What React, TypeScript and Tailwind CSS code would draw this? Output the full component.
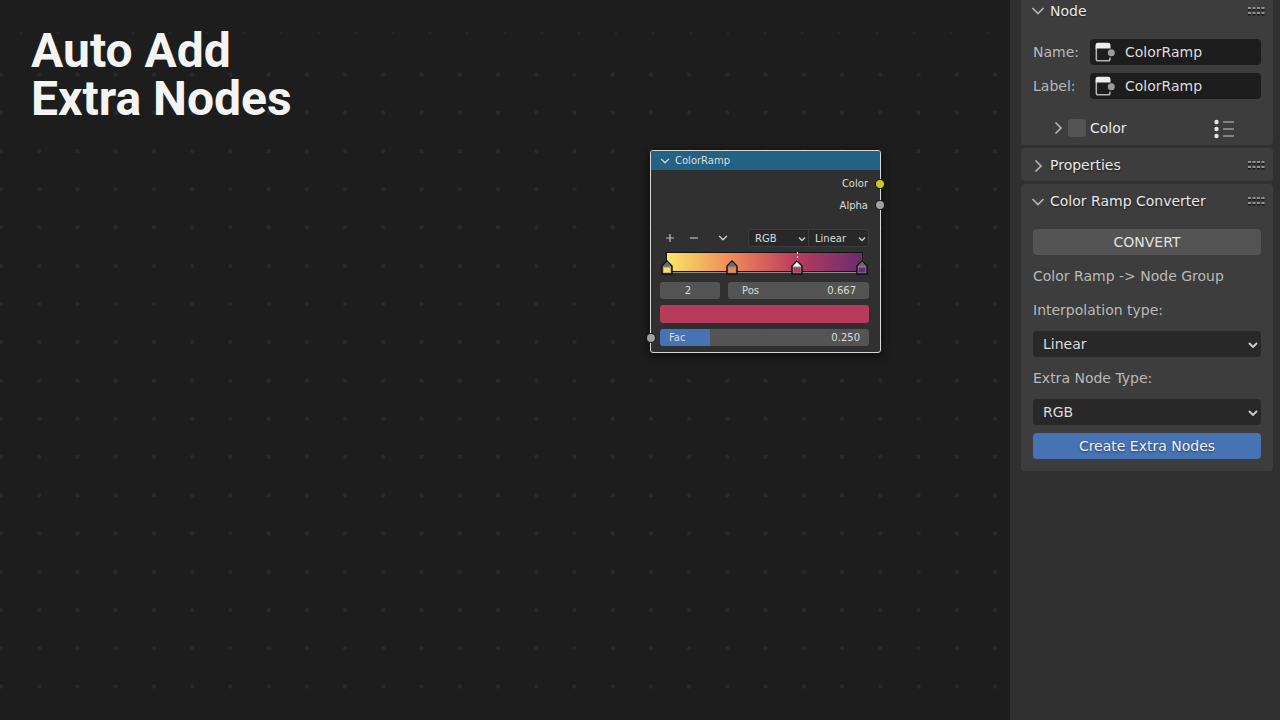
import React from 'react';

const COLS = 60;
const ROWS = 40;

const STOPS = [
  { pos: 0, color: '#f7e45c', active: false },
  { pos: 65, color: '#f0824f', active: false },
  { pos: 130, color: '#b73a5d', active: true },
  { pos: 195, color: '#6b2a7c', active: false },
];

function CanvasGrid() {
  const dots: React.ReactNode[] = [];
  for (let col = 0; col < COLS; col++) {
    dots.push(<rect key={`top-${col}`} x={Math.round(20 + col * 37.2)} y={32} width={2} height={2} fill="#262626" />);
    for (let row = 0; row < ROWS; row++) {
      dots.push(
        <circle
          key={`${col}-${row}`}
          cx={1 + col * 38.23}
          cy={74.5 + row * 38.25}
          r={2.2}
          fill="#292929"
        />
      );
    }
  }
  return (
    <svg className="absolute inset-0 h-full w-full" aria-hidden="true">
      {dots}
    </svg>
  );
}

function Chevron({ open = true, className = '' }: { open?: boolean; className?: string }) {
  return (
    <svg viewBox="0 0 14 14" className={className} fill="none" stroke="currentColor" strokeWidth="1.7" aria-hidden="true">
      <path d={open ? 'M1.5 4 L7 9.5 L12.5 4' : 'M4.5 1.5 L10 7 L4.5 12.5'} />
    </svg>
  );
}

function SelectArrow({ className = '' }: { className?: string }) {
  return (
    <svg viewBox="0 0 10 8" className={className} fill="none" stroke="#d0d0d0" strokeWidth="1.8" aria-hidden="true">
      <path d="M1 2 L5 6 L9 2" />
    </svg>
  );
}

function Grip() {
  return (
    <svg viewBox="0 0 17 9" className="h-[9px] w-[17px]" aria-hidden="true">
      {[0, 4.5, 9, 13.5].map((x) =>
        [0, 5].map((y) => (
          <g key={`${x}-${y}`}>
            <rect x={x} y={y + 2} width="3" height="1.6" fill="#1b1b1b" />
            <rect x={x} y={y} width="3" height="2" fill="#8f8f8f" />
          </g>
        ))
      )}
    </svg>
  );
}

function NodeIcon() {
  return (
    <svg viewBox="0 0 20 20" className="h-5 w-5 shrink-0" fill="none" aria-hidden="true">
      <path d="M1.3 6 V17 Q1.3 18.8 3 18.8 H13 Q15 18.8 15 17 V15.5" stroke="#b4b4b4" strokeWidth="1.5" />
      <path d="M0.5 6.5 V3 Q0.5 0.8 3 0.8 H13 Q15.5 0.8 15.5 3 V6.5 Z" fill="#ededed" />
      <circle cx="16.3" cy="10.8" r="3.5" fill="#9c9c9c" />
    </svg>
  );
}

function PanelHeader({ title, open = true, className }: { title: string; open?: boolean; className: string }) {
  return (
    <button type="button" aria-expanded={open} className={`flex w-full items-center pr-2 pl-[10px] text-left ${className}`}>
      <Chevron open={open} className="h-[14px] w-[14px] text-[#b5b5b5]" />
      <span className="ml-[5px] flex-1 text-[#e8e8e8] [text-shadow:0_1px_2px_#1c1c1c]">{title}</span>
      <Grip />
    </button>
  );
}

function NameField({ id, label }: { id: string; label: string }) {
  return (
    <div className="flex h-[26px] items-center">
      <label htmlFor={id} className="w-[57px] text-[#b9b9b9]">{label}</label>
      <div className="flex h-full min-w-0 flex-1 items-center rounded bg-[#1d1d1d] pl-[5px]">
        <NodeIcon />
        <input id={id} defaultValue="ColorRamp" className="ml-[10px] w-full min-w-0 bg-transparent text-[#dcdcdc] outline-none" />
      </div>
    </div>
  );
}

function PanelSelect({ id, label, value }: { id: string; label: string; value: string }) {
  return (
    <>
      <label htmlFor={id} className="h-[26px] leading-[26px] text-[#b9b9b9]">{label}</label>
      <div className="relative h-[26px]">
        <select id={id} className="h-full w-full appearance-none rounded bg-[#282828] pl-[10px] text-[#dcdcdc]">
          <option>{value}</option>
        </select>
        <SelectArrow className="pointer-events-none absolute top-[10px] right-[3px] h-2 w-[10px]" />
      </div>
    </>
  );
}

function NodeSelect({ label, value, className }: { label: string; value: string; className: string }) {
  return (
    <div className={`relative h-[18px] border border-[#3c3c3c] bg-[#282828] ${className}`}>
      <select aria-label={label} className="h-full w-full appearance-none pl-[6px] text-[#dcdcdc]">
        <option>{value}</option>
      </select>
      <SelectArrow className="pointer-events-none absolute top-[6px] right-[2px] h-[6px] w-2" />
    </div>
  );
}

function RampStrip() {
  return (
    <svg viewBox="0 0 209 26" className="mt-1 block h-[26px] w-full overflow-visible" role="img" aria-label="Color ramp">
      <defs>
        <linearGradient id="ramp">
          <stop offset="0" stopColor="#f9e866" />
          <stop offset="0.333" stopColor="#f0875a" />
          <stop offset="0.667" stopColor="#b83b5e" />
          <stop offset="1" stopColor="#6a2c70" />
        </linearGradient>
      </defs>
      <rect x="6" y="1" width="197" height="20" fill="#141414" />
      <rect x="7" y="2" width="195" height="18" fill="url(#ramp)" />
      <path d="M7 21.5 H202" stroke="#8a8a8a" />
      <path d="M137.5 1 V11" stroke="#ffffff" strokeDasharray="2 2" />
      {STOPS.map((stop) => (
        <g key={stop.pos} transform={`translate(${stop.pos + 7} 0)`}>
          <path d="M0 10 L5 15 V23 H-5 V15 Z" fill="#8d8d8d" stroke="#0c0c0c" strokeWidth="1.4" />
          <path d="M0 11 L4.3 15.5 H-4.3 Z" fill={stop.active ? '#f2f2f2' : '#6a6a6a'} />
          <rect x="-3.5" y="16.5" width="7" height="5" fill={stop.color} />
        </g>
      ))}
    </svg>
  );
}

function ColorRampNode() {
  return (
    <section className="absolute top-[150px] left-[650px] w-[231px] rounded-[3px] border border-[#d8d8d8] bg-[#303030] text-[10px] text-[#dcdcdc] shadow-[0_2px_8px_#0a0a0a]">
      <header className="flex h-[19px] items-center rounded-t-[2px] bg-[#246283] pl-[9px]">
        <Chevron className="h-[10px] w-[10px]" />
        <h2 className="ml-[5px]">ColorRamp</h2>
      </header>

      <div className="flex flex-col items-end pt-[3px] pr-3">
        <span className="leading-[22px]">Color</span>
        <span className="leading-[22px]">Alpha</span>
      </div>
      <span className="absolute top-[29px] -right-1 h-2 w-2 rounded-full bg-[#c7c729] ring-1 ring-[#1a1a1a]" />
      <span className="absolute top-[50px] -right-1 h-2 w-2 rounded-full bg-[#a1a1a1] ring-1 ring-[#1a1a1a]" />
      <span className="absolute bottom-[10px] -left-1 h-2 w-2 rounded-full bg-[#a1a1a1] ring-1 ring-[#1a1a1a]" />

      <div className="pt-3 pr-[11px] pb-[6px] pl-[9px]">
        <div className="flex h-[18px] items-center">
          <button type="button" aria-label="Add stop" className="w-[19px]">
            <svg viewBox="0 0 10 10" className="mx-auto h-[10px] w-[10px]" stroke="#bdbdbd" strokeWidth="1.2"><path d="M1 5 H9 M5 1 V9" /></svg>
          </button>
          <button type="button" aria-label="Remove stop" className="ml-[5px] w-[19px]">
            <svg viewBox="0 0 10 10" className="mx-auto h-[10px] w-[10px]" stroke="#bdbdbd" strokeWidth="1.2"><path d="M1 5 H9" /></svg>
          </button>
          <button type="button" aria-label="Ramp tools" className="ml-[10px] w-[19px]">
            <Chevron className="mx-auto h-[10px] w-[10px]" />
          </button>
          <NodeSelect label="Color mode" value="RGB" className="ml-auto w-[61px] rounded-l-[3px]" />
          <NodeSelect label="Interpolation" value="Linear" className="-ml-px w-[61px] rounded-r-[3px]" />
        </div>

        <RampStrip />

        <div className="mt-[5px] flex h-[17px] gap-2">
          <input aria-label="Active stop" defaultValue="2" className="w-[60px] rounded-[3px] bg-[#545454] pr-1 text-center" />
          <label className="flex min-w-0 flex-1 items-center rounded-[3px] bg-[#545454] pr-[13px] pl-[14px]">
            Pos
            <input defaultValue="0.667" className="min-w-0 flex-1 bg-transparent text-right" />
          </label>
        </div>
        <button type="button" aria-label="Stop color" className="mt-[6px] block h-[18px] w-full rounded-[3px] bg-[#b83b5e]" />
        <label className="mt-[6px] flex h-[17px] items-center rounded-[3px] bg-linear-to-r from-[#4772b3] from-24% to-[#545454] to-24% px-[9px]">
          Fac
          <input defaultValue="0.250" className="min-w-0 flex-1 bg-transparent text-right" />
        </label>
      </div>
    </section>
  );
}

function Sidebar() {
  return (
    <aside className="flex w-[270px] shrink-0 flex-col gap-[3px] bg-[#303030] pr-[7px] pl-[11px] text-[14px]">
      <section className="rounded-b bg-[#3d3d3d]">
        <PanelHeader title="Node" className="h-[22px]" />
        <div className="px-3 pt-[17px] pb-1">
          <NameField id="node-name" label="Name:" />
          <div className="mt-2">
            <NameField id="node-label" label="Label:" />
          </div>
          <div className="mt-4 flex h-[26px] items-center pl-[18px]">
            <Chevron open={false} className="h-[14px] w-[14px] text-[#b5b5b5]" />
            <input id="use-color" type="checkbox" className="ml-[3px] h-[18px] w-[18px] appearance-none rounded-[3px] bg-[#545454]" />
            <label htmlFor="use-color" className="ml-1 flex-1 text-[#e8e8e8]">Color</label>
            <button type="button" aria-label="Color presets" className="mr-[27px] pt-0.5">
              <svg viewBox="0 0 20 20" className="h-5 w-5">
                {[3, 10, 17].map((y) => (
                  <g key={y}>
                    <circle cx="2.5" cy={y} r="2.2" fill="#e6e6e6" />
                    <path d={`M9 ${y} H20`} stroke="#a9a9a9" strokeWidth="1.3" />
                  </g>
                ))}
              </svg>
            </button>
          </div>
        </div>
      </section>

      <section className="rounded bg-[#3d3d3d]">
        <PanelHeader title="Properties" open={false} className="h-[33px] pt-0.5" />
      </section>

      <section className="rounded bg-[#3d3d3d]">
        <PanelHeader title="Color Ramp Converter" className="h-[33px] pt-0.5" />
        <div className="flex flex-col gap-2 px-3 pt-3 pb-3">
          <button type="button" className="h-[26px] rounded bg-[#545454] text-[#e0e0e0]">CONVERT</button>
          <p className="h-[26px] leading-[26px] text-[#b9b9b9]">Color Ramp -&gt; Node Group</p>
          <PanelSelect id="interpolation" label="Interpolation type:" value="Linear" />
          <PanelSelect id="extra-node" label="Extra Node Type:" value="RGB" />
          <button type="button" className="h-[26px] rounded bg-[#4772b3] text-[#f0f0f0] [text-shadow:0_1px_2px_#24406b]">
            Create Extra Nodes
          </button>
        </div>
      </section>
    </aside>
  );
}

export default function App() {
  return (
    <div className="flex min-h-screen bg-[#1d1d1d] font-['DejaVu_Sans',sans-serif]">
      <main className="relative min-w-0 flex-1 overflow-hidden">
        <CanvasGrid />
        <h1 className="relative pt-[27px] pl-[31px] font-['Roboto',sans-serif] text-5xl leading-12 font-bold text-[#f4f4f4]">
          Auto Add
          <br />
          Extra Nodes
        </h1>
        <ColorRampNode />
      </main>
      <Sidebar />
    </div>
  );
}
